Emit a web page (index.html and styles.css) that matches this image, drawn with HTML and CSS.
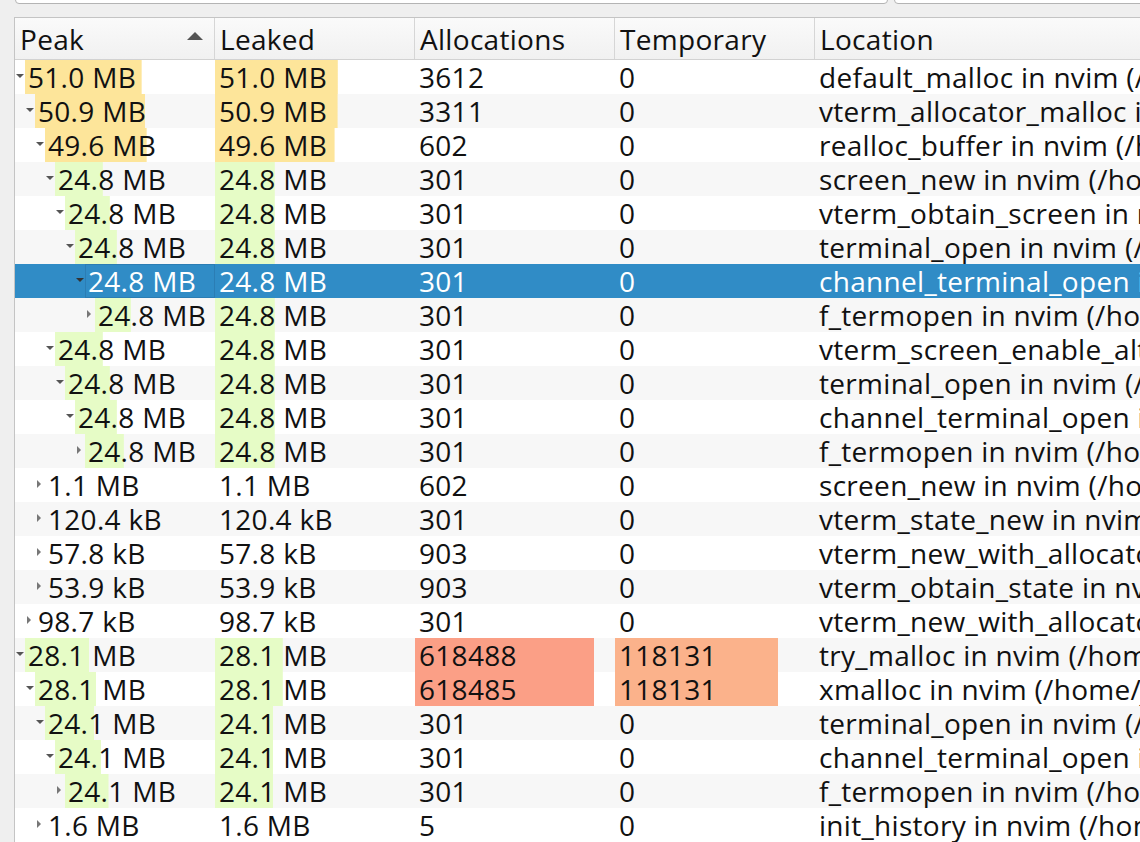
FILE: index.html
```html
<!DOCTYPE html>
<html>
<head>
<meta charset="utf-8">
<link rel="stylesheet" href="styles.css">
</head>
<body>
<div class="filters">
  <div class="field field-main">Filter by function...</div>
  <div class="field field-side">Filter by file...</div>
</div>
<div class="tree">
  <div class="header">
    <div class="hcell sorted">Peak<span class="sort"></span></div>
    <div class="hcell">Leaked</div>
    <div class="hcell">Allocations</div>
    <div class="hcell">Temporary</div>
    <div class="hcell last">Location</div>
  </div>

  <div class="row">
    <div class="cell peak" style="--d:0"><span class="tw down"></span><span class="val y" style="--w:61.4%">51.0 MB</span></div>
    <div class="cell y" style="--w:61.4%">51.0 MB</div>
    <div class="cell">3612</div>
    <div class="cell">0</div>
    <div class="cell loc">default_malloc in nvim (/home/jm/src/neovim/build/bin/nvim)</div>
  </div>
  <div class="row">
    <div class="cell peak" style="--d:1"><span class="tw down"></span><span class="val y" style="--w:61.3%">50.9 MB</span></div>
    <div class="cell y" style="--w:61.3%">50.9 MB</div>
    <div class="cell">3311</div>
    <div class="cell">0</div>
    <div class="cell loc">vterm_allocator_malloc in nvim (/home/jm/src/neovim/build/bin/nvim)</div>
  </div>
  <div class="row">
    <div class="cell peak" style="--d:2"><span class="tw down"></span><span class="val y" style="--w:59.8%">49.6 MB</span></div>
    <div class="cell y" style="--w:59.8%">49.6 MB</div>
    <div class="cell">602</div>
    <div class="cell">0</div>
    <div class="cell loc">realloc_buffer in nvim (/home/jm/src/neovim/build/bin/nvim)</div>
  </div>
  <div class="row">
    <div class="cell peak" style="--d:3"><span class="tw down"></span><span class="val g" style="--w:29.9%">24.8 MB</span></div>
    <div class="cell g" style="--w:29.9%">24.8 MB</div>
    <div class="cell">301</div>
    <div class="cell">0</div>
    <div class="cell loc">screen_new in nvim (/home/jm/src/neovim/build/bin/nvim)</div>
  </div>
  <div class="row">
    <div class="cell peak" style="--d:4"><span class="tw down"></span><span class="val g" style="--w:29.9%">24.8 MB</span></div>
    <div class="cell g" style="--w:29.9%">24.8 MB</div>
    <div class="cell">301</div>
    <div class="cell">0</div>
    <div class="cell loc">vterm_obtain_screen in nvim (/home/jm/src/neovim/build/bin/nvim)</div>
  </div>
  <div class="row">
    <div class="cell peak" style="--d:5"><span class="tw down"></span><span class="val g" style="--w:29.9%">24.8 MB</span></div>
    <div class="cell g" style="--w:29.9%">24.8 MB</div>
    <div class="cell">301</div>
    <div class="cell">0</div>
    <div class="cell loc">terminal_open in nvim (/home/jm/src/neovim/build/bin/nvim)</div>
  </div>
  <div class="row selected">
    <div class="cell peak" style="--d:6"><span class="tw down"></span><span class="val focus">24.8 MB</span></div>
    <div class="cell">24.8 MB</div>
    <div class="cell">301</div>
    <div class="cell">0</div>
    <div class="cell loc">channel_terminal_open in nvim (/home/jm/src/neovim/build/bin/nvim)</div>
  </div>
  <div class="row">
    <div class="cell peak" style="--d:7"><span class="tw right"></span><span class="val g" style="--w:29.9%">24.8 MB</span></div>
    <div class="cell g" style="--w:29.9%">24.8 MB</div>
    <div class="cell">301</div>
    <div class="cell">0</div>
    <div class="cell loc">f_termopen in nvim (/home/jm/src/neovim/build/bin/nvim)</div>
  </div>
  <div class="row">
    <div class="cell peak" style="--d:3"><span class="tw down"></span><span class="val g" style="--w:29.9%">24.8 MB</span></div>
    <div class="cell g" style="--w:29.9%">24.8 MB</div>
    <div class="cell">301</div>
    <div class="cell">0</div>
    <div class="cell loc">vterm_screen_enable_altscreen in nvim (/home/jm/src/neovim/build/bin/nvim)</div>
  </div>
  <div class="row">
    <div class="cell peak" style="--d:4"><span class="tw down"></span><span class="val g" style="--w:29.9%">24.8 MB</span></div>
    <div class="cell g" style="--w:29.9%">24.8 MB</div>
    <div class="cell">301</div>
    <div class="cell">0</div>
    <div class="cell loc">terminal_open in nvim (/home/jm/src/neovim/build/bin/nvim)</div>
  </div>
  <div class="row">
    <div class="cell peak" style="--d:5"><span class="tw down"></span><span class="val g" style="--w:29.9%">24.8 MB</span></div>
    <div class="cell g" style="--w:29.9%">24.8 MB</div>
    <div class="cell">301</div>
    <div class="cell">0</div>
    <div class="cell loc">channel_terminal_open in nvim (/home/jm/src/neovim/build/bin/nvim)</div>
  </div>
  <div class="row">
    <div class="cell peak" style="--d:6"><span class="tw right"></span><span class="val g" style="--w:29.9%">24.8 MB</span></div>
    <div class="cell g" style="--w:29.9%">24.8 MB</div>
    <div class="cell">301</div>
    <div class="cell">0</div>
    <div class="cell loc">f_termopen in nvim (/home/jm/src/neovim/build/bin/nvim)</div>
  </div>
  <div class="row">
    <div class="cell peak" style="--d:2"><span class="tw right"></span><span class="val">1.1 MB</span></div>
    <div class="cell">1.1 MB</div>
    <div class="cell">602</div>
    <div class="cell">0</div>
    <div class="cell loc">screen_new in nvim (/home/jm/src/neovim/build/bin/nvim)</div>
  </div>
  <div class="row">
    <div class="cell peak" style="--d:2"><span class="tw right"></span><span class="val">120.4 kB</span></div>
    <div class="cell">120.4 kB</div>
    <div class="cell">301</div>
    <div class="cell">0</div>
    <div class="cell loc">vterm_state_new in nvim (/home/jm/src/neovim/build/bin/nvim)</div>
  </div>
  <div class="row">
    <div class="cell peak" style="--d:2"><span class="tw right"></span><span class="val">57.8 kB</span></div>
    <div class="cell">57.8 kB</div>
    <div class="cell">903</div>
    <div class="cell">0</div>
    <div class="cell loc">vterm_new_with_allocator in nvim (/home/jm/src/neovim/build/bin/nvim)</div>
  </div>
  <div class="row">
    <div class="cell peak" style="--d:2"><span class="tw right"></span><span class="val">53.9 kB</span></div>
    <div class="cell">53.9 kB</div>
    <div class="cell">903</div>
    <div class="cell">0</div>
    <div class="cell loc">vterm_obtain_state in nvim (/home/jm/src/neovim/build/bin/nvim)</div>
  </div>
  <div class="row">
    <div class="cell peak" style="--d:1"><span class="tw right"></span><span class="val">98.7 kB</span></div>
    <div class="cell">98.7 kB</div>
    <div class="cell">301</div>
    <div class="cell">0</div>
    <div class="cell loc">vterm_new_with_allocator in nvim (/home/jm/src/neovim/build/bin/nvim)</div>
  </div>
  <div class="row">
    <div class="cell peak" style="--d:0"><span class="tw down"></span><span class="val g" style="--w:33.9%">28.1 MB</span></div>
    <div class="cell g" style="--w:33.9%">28.1 MB</div>
    <div class="cell r" style="--w:89.5%">618488</div>
    <div class="cell o" style="--w:81.5%">118131</div>
    <div class="cell loc">try_malloc in nvim (/home/jm/src/neovim/build/bin/nvim)</div>
  </div>
  <div class="row">
    <div class="cell peak" style="--d:1"><span class="tw down"></span><span class="val g" style="--w:33.9%">28.1 MB</span></div>
    <div class="cell g" style="--w:33.9%">28.1 MB</div>
    <div class="cell r" style="--w:89.5%">618485</div>
    <div class="cell o" style="--w:81.5%">118131</div>
    <div class="cell loc">xmalloc in nvim (/home/jm/src/neovim/build/bin/nvim)</div>
  </div>
  <div class="row">
    <div class="cell peak" style="--d:2"><span class="tw down"></span><span class="val g" style="--w:29%">24.1 MB</span></div>
    <div class="cell g" style="--w:29%">24.1 MB</div>
    <div class="cell">301</div>
    <div class="cell">0</div>
    <div class="cell loc">terminal_open in nvim (/home/jm/src/neovim/build/bin/nvim)</div>
  </div>
  <div class="row">
    <div class="cell peak" style="--d:3"><span class="tw down"></span><span class="val g" style="--w:29%">24.1 MB</span></div>
    <div class="cell g" style="--w:29%">24.1 MB</div>
    <div class="cell">301</div>
    <div class="cell">0</div>
    <div class="cell loc">channel_terminal_open in nvim (/home/jm/src/neovim/build/bin/nvim)</div>
  </div>
  <div class="row">
    <div class="cell peak" style="--d:4"><span class="tw right"></span><span class="val g" style="--w:29%">24.1 MB</span></div>
    <div class="cell g" style="--w:29%">24.1 MB</div>
    <div class="cell">301</div>
    <div class="cell">0</div>
    <div class="cell loc">f_termopen in nvim (/home/jm/src/neovim/build/bin/nvim)</div>
  </div>
  <div class="row">
    <div class="cell peak" style="--d:2"><span class="tw right"></span><span class="val">1.6 MB</span></div>
    <div class="cell">1.6 MB</div>
    <div class="cell">5</div>
    <div class="cell">0</div>
    <div class="cell loc">init_history in nvim (/home/jm/src/neovim/build/bin/nvim)</div>
  </div>
</div>
</body>
</html>
```

FILE: styles.css
```css
html, body {
  margin: 0;
  padding: 0;
}
body {
  width: 1140px;
  height: 842px;
  overflow: hidden;
  background: #efefef;
  font-family: "Open Sans", "Noto Sans", sans-serif;
  font-size: 28px;
  letter-spacing: 0.3px;
  color: #111;
}

.filters {
  display: flex;
  gap: 6px;
  padding-left: 15px;
  margin-top: -38px;
  height: 42px;
}
.field {
  box-sizing: border-box;
  height: 42px;
  background: #fff;
  border: 1px solid #b4b4b4;
  border-radius: 4px;
  color: #8a8a8a;
  padding: 0 0 0 7px;
  line-height: 28px;
  white-space: nowrap;
  overflow: hidden;
}
.field-main { width: 873px; }
.field-side { flex: 1; margin-right: -20px; }

.tree {
  margin-top: 13px;
  margin-left: 14px;
  border-left: 1px solid #c4c4c4;
  border-top: 1px solid #c4c4c4;
  background: #fff;
  height: 900px;
}

.header,
.row {
  display: grid;
  grid-template-columns: 200px 200px 200px 200px 1fr;
}
.header {
  height: 41px;
  border-bottom: 1px solid #d2d2d2;
  background: linear-gradient(#fafafa, #f1f1f1);
}
.hcell {
  box-sizing: border-box;
  display: flex;
  align-items: center;
  justify-content: space-between;
  padding: 0 11px 0 5px;
  border-right: 1px solid #d6d6d6;
  white-space: nowrap;
}
.hcell.last { border-right: none; }
.sort {
  width: 0;
  height: 0;
  border-left: 8px solid transparent;
  border-right: 8px solid transparent;
  border-bottom: 8px solid #555;
  margin-top: -6px;
}

.row {
  height: 34px;
  line-height: 34px;
}
.row:nth-child(odd) { background: #f7f7f7; }
.row.selected { background: #308cc6; color: #fff; }

.cell {
  box-sizing: border-box;
  white-space: nowrap;
  overflow: hidden;
  padding-left: 4px;
  background-repeat: no-repeat;
  background-size: var(--w, 0) 100%;
}
.cell.peak {
  display: flex;
  padding-left: calc(var(--d) * 10px);
}
.tw {
  flex: none;
  width: 10px;
  position: relative;
}
.tw::before {
  content: "";
  position: absolute;
  top: 50%;
}
.tw.down::before {
  left: 1px;
  margin-top: -3px;
  border-left: 4px solid transparent;
  border-right: 4px solid transparent;
  border-top: 4px solid #555;
}
.tw.right::before {
  left: 2px;
  margin-top: -5px;
  border-top: 4.5px solid transparent;
  border-bottom: 4.5px solid transparent;
  border-left: 4.5px solid #777;
}
.selected .tw::before { border-top-color: #333; }
.val {
  flex: 1;
  padding-left: 3px;
  background-repeat: no-repeat;
  background-size: var(--w, 0) 100%;
}
.val.focus {
  box-shadow: inset 0 0 0 1px #2b7db4;
}

.y { background-image: linear-gradient(#fde59a, #fde59a); }
.g { background-image: linear-gradient(#e6fcc6, #e6fcc6); }
.r { background-image: linear-gradient(#fb9f86, #fb9f86); }
.o { background-image: linear-gradient(#fbb28b, #fbb28b); }

.loc { padding-left: 4px; }
```
